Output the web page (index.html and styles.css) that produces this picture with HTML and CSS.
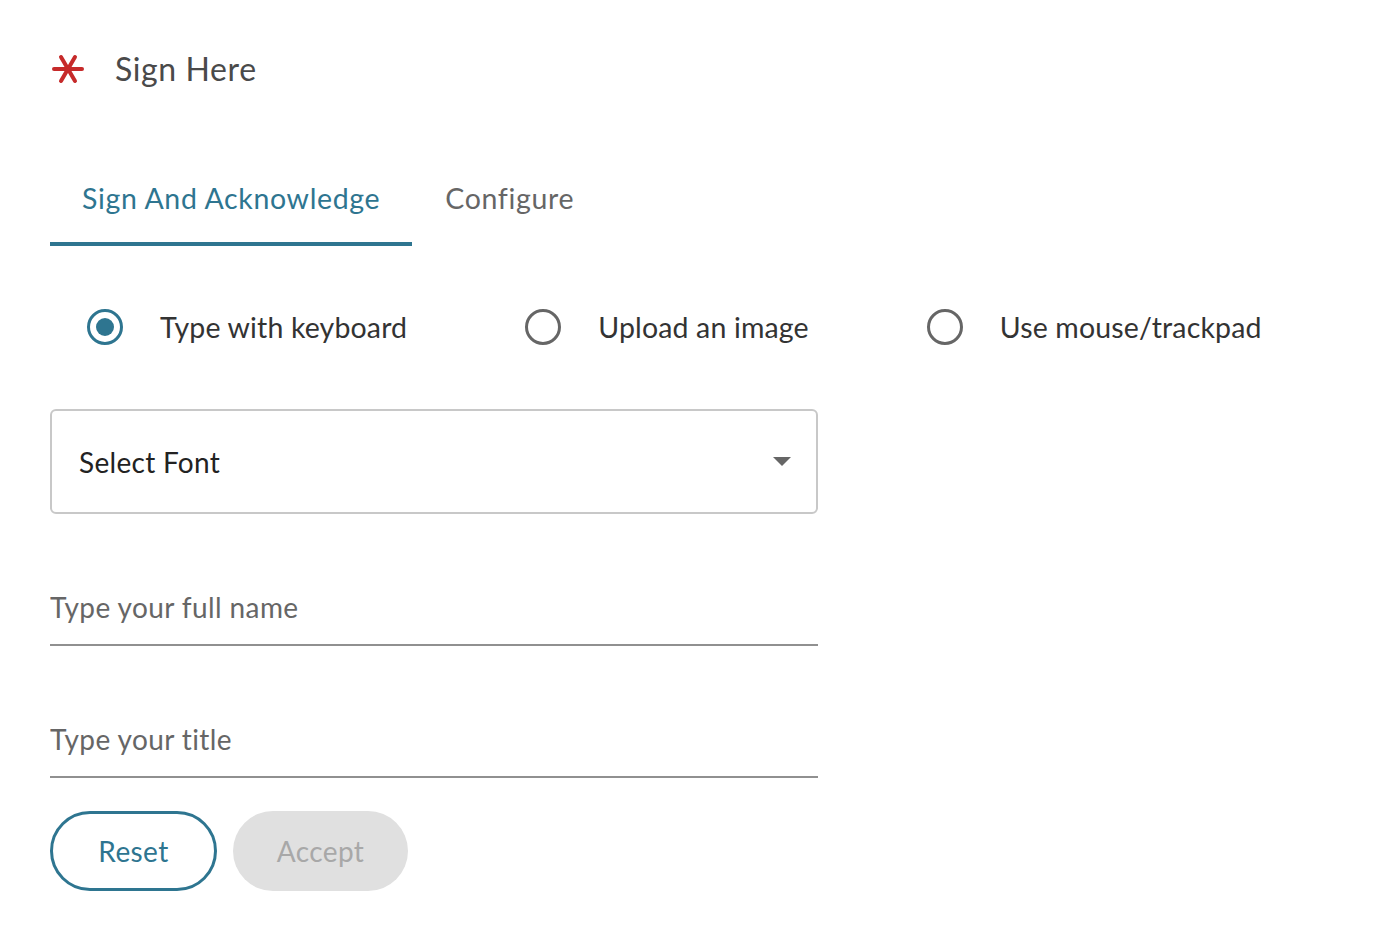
FILE: index.html
```html
<!DOCTYPE html>
<html lang="en">

<head>
    <meta charset="UTF-8">
    <link rel="stylesheet" href="styles.css">
    <title>Sign Here</title>
</head>

<body>
    <div id="wrapper">
        <header class="title-row">
            <svg class="required" width="34" height="34" viewBox="0 0 34 34">
                <g stroke="#c62a2a" stroke-width="4" stroke-linecap="round">
                    <line x1="3" y1="17" x2="31" y2="17"></line>
                    <line x1="10" y1="5" x2="24" y2="29"></line>
                    <line x1="24" y1="5" x2="10" y2="29"></line>
                </g>
            </svg>
            <h1 class="title">Sign Here</h1>
        </header>

        <nav class="tabs">
            <div class="tab active">Sign And Acknowledge</div>
            <div class="tab">Configure</div>
        </nav>

        <div class="radios">
            <label class="radio checked"><span class="dot"></span>Type with keyboard</label>
            <label class="radio"><span class="dot"></span>Upload an image</label>
            <label class="radio"><span class="dot"></span>Use mouse/trackpad</label>
        </div>

        <div class="form">
            <div class="select">
                <span>Select Font</span>
                <span class="arrow"></span>
            </div>

            <div class="field">
                <input type="text" class="line-input" placeholder="Type your full name">
            </div>
            <div class="field">
                <input type="text" class="line-input" placeholder="Type your title">
            </div>
        </div>

        <div class="buttons">
            <button class="btn reset">Reset</button>
            <button class="btn accept" disabled>Accept</button>
        </div>
    </div>
</body>

</html>
```

FILE: styles.css
```css
body {
    margin: 0;
    background-color: white;
    font-family: "Lato", "Open Sans", sans-serif;
    font-size: 100%;
}

button,
input {
    font-family: inherit;
    margin: 0;
}

#wrapper {
    padding: 44px 50px 0 50px;
}

.title-row {
    display: flex;
    align-items: center;
    height: 48px;
}

.required {
    margin-left: 1px;
    margin-top: 2px;
}

.title {
    margin: 0 0 0 30px;
    font-size: 32px;
    font-weight: 400;
    letter-spacing: 0.6px;
    color: #4a4a4a;
}

.tabs {
    display: flex;
    margin-top: 76px;
}

.tab {
    padding: 12px 32px 26px 32px;
    font-size: 28.5px;
    line-height: 36px;
    letter-spacing: 0.65px;
    color: #666;
    border-bottom: 4px solid transparent;
}

.tab.active {
    color: #2e7590;
    border-bottom-color: #2e7590;
}

.tab + .tab {
    padding-left: 33px;
}

.radios {
    display: flex;
    gap: 118px;
    margin-top: 63px;
    padding-left: 37px;
}

.radio {
    display: flex;
    align-items: center;
    white-space: nowrap;
    font-size: 28.5px;
    line-height: 36px;
    letter-spacing: 0.15px;
    color: #333;
}

.dot {
    flex-shrink: 0;
    box-sizing: border-box;
    width: 36px;
    height: 36px;
    margin-right: 37px;
    border: 3px solid #666;
    border-radius: 50%;
    position: relative;
}

.radio.checked .dot {
    border-color: #2e7590;
}

.radio.checked .dot::after {
    content: "";
    position: absolute;
    left: 6px;
    top: 6px;
    width: 18px;
    height: 18px;
    border-radius: 50%;
    background-color: #2e7590;
}

.form {
    width: 768px;
}

.select {
    display: flex;
    align-items: center;
    justify-content: space-between;
    height: 101px;
    margin-top: 64px;
    padding: 0 25px 0 27px;
    border: 2px solid #c8c8c8;
    border-radius: 6px;
    font-size: 28px;
    letter-spacing: 0.3px;
    color: #222;
}

.arrow {
    width: 0;
    height: 0;
    border-left: 9px solid transparent;
    border-right: 9px solid transparent;
    border-top: 9px solid #666;
}

.field {
    margin-top: 66px;
}

.line-input {
    display: block;
    box-sizing: border-box;
    width: 100%;
    height: 66px;
    padding: 0 0 10px 0;
    border: none;
    border-bottom: 2px solid #909090;
    font-size: 28px;
    letter-spacing: 0.4px;
    color: #333;
    outline: none;
}

.line-input::placeholder {
    color: #666;
}

.buttons {
    display: flex;
    gap: 16px;
    margin-top: 33px;
}

.btn {
    height: 80px;
    border-radius: 40px;
    font-size: 28px;
    letter-spacing: 0.4px;
}

.reset {
    width: 167px;
    background: white;
    color: #2e7590;
    border: 3px solid #2e7590;
}

.accept {
    width: 175px;
    background: #e0e0e0;
    color: #a8a8a8;
    border: none;
}
```
